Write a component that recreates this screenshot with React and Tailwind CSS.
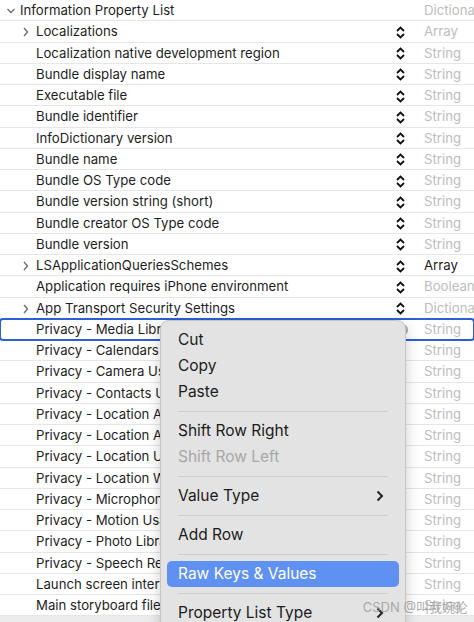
import React from 'react'

const rows = [
  { key: 'Information Property List', type: 'Dictionary', level: 0, open: true, noIcon: true },
  { key: 'Localizations', type: 'Array', level: 1, closed: true },
  { key: 'Localization native development region', type: 'String', level: 1 },
  { key: 'Bundle display name', type: 'String', level: 1 },
  { key: 'Executable file', type: 'String', level: 1 },
  { key: 'Bundle identifier', type: 'String', level: 1 },
  { key: 'InfoDictionary version', type: 'String', level: 1 },
  { key: 'Bundle name', type: 'String', level: 1 },
  { key: 'Bundle OS Type code', type: 'String', level: 1 },
  { key: 'Bundle version string (short)', type: 'String', level: 1 },
  { key: 'Bundle creator OS Type code', type: 'String', level: 1 },
  { key: 'Bundle version', type: 'String', level: 1 },
  { key: 'LSApplicationQueriesSchemes', type: 'Array', level: 1, closed: true, dark: true },
  { key: 'Application requires iPhone environment', type: 'Boolean', level: 1 },
  { key: 'App Transport Security Settings', type: 'Dictionary', level: 1, closed: true },
  { key: 'Privacy - Media Library Usage Description', type: 'String', level: 1, selected: true },
  { key: 'Privacy - Calendars Usage Description', type: 'String', level: 1, noIcon: true },
  { key: 'Privacy - Camera Usage Description', type: 'String', level: 1, noIcon: true },
  { key: 'Privacy - Contacts Usage Description', type: 'String', level: 1, noIcon: true },
  { key: 'Privacy - Location Always Usage Description', type: 'String', level: 1, noIcon: true },
  { key: 'Privacy - Location Always and When In Use Usage Description', type: 'String', level: 1, noIcon: true },
  { key: 'Privacy - Location Usage Description', type: 'String', level: 1, noIcon: true },
  { key: 'Privacy - Location When In Use Usage Description', type: 'String', level: 1, noIcon: true },
  { key: 'Privacy - Microphone Usage Description', type: 'String', level: 1, noIcon: true },
  { key: 'Privacy - Motion Usage Description', type: 'String', level: 1, noIcon: true },
  { key: 'Privacy - Photo Library Usage Description', type: 'String', level: 1, noIcon: true },
  { key: 'Privacy - Speech Recognition Usage Description', type: 'String', level: 1, noIcon: true },
  { key: 'Launch screen interface file base name', type: 'String', level: 1, noIcon: true },
  { key: 'Main storyboard file base name', type: 'String', level: 1, noIcon: true },
]

function Chevron({ down }) {
  return (
    <svg width="8" height="10" viewBox="0 0 8 10">
      {down ? (
        <path d="M0.5 3 L4 6.5 L7.5 3" fill="none" stroke="#6b6b6b" strokeWidth="1.3" />
      ) : (
        <path d="M2 1 L5.5 5 L2 9" fill="none" stroke="#6b6b6b" strokeWidth="1.3" />
      )}
    </svg>
  )
}

function UpDown() {
  return (
    <svg width="9" height="13" viewBox="0 0 9 13">
      <path d="M1 5 L4.5 1.5 L8 5" fill="none" stroke="#111" strokeWidth="1.8" />
      <path d="M1 8 L4.5 11.5 L8 8" fill="none" stroke="#111" strokeWidth="1.8" />
    </svg>
  )
}

function Row({ r }) {
  return (
    <div
      className={`relative flex items-center h-[21.25px] pt-[2px] border-b border-[#e6e6e6] ${
        r.selected ? 'outline-2 outline-[#2c5fd4] -outline-offset-1 rounded-[3px] z-10' : ''
      }`}
    >
      <div className="flex items-center w-[390px] shrink-0 overflow-hidden">
        {r.level === 0 ? (
          <div className="w-[20px] shrink-0 flex justify-center pl-[2px]">
            <Chevron down />
          </div>
        ) : (
          <div className="w-[36px] shrink-0 flex pl-[22px]">{r.closed && <Chevron />}</div>
        )}
        <span className="whitespace-nowrap text-[#1e1e1e]">{r.key}</span>
      </div>
      <div className="w-[34px] shrink-0 flex justify-start pl-[6px]">
        {!r.noIcon && !r.selected && <UpDown />}
        {r.selected && <span className="w-[12px] h-[12px] rounded-full bg-[#a9a9a9]" />}
      </div>
      <span className={`whitespace-nowrap ${r.dark ? 'text-[#1e1e1e]' : 'text-[#bdbdbd]'}`}>{r.type}</span>
    </div>
  )
}

function MenuItem({ label, disabled, sub, active }) {
  return (
    <div
      className={`flex items-center justify-between h-[26px] mx-[6px] px-[11px] rounded-[5px] ${
        active ? 'bg-[#5e91f1] text-white' : disabled ? 'text-[#a8a8a8]' : 'text-[#1c1c1c]'
      }`}
    >
      <span>{label}</span>
      {sub && (
        <svg width="8" height="12" viewBox="0 0 8 12" className="mr-[4px]">
          <path d="M1.5 1.5 L6 6 L1.5 10.5" fill="none" stroke="#222" strokeWidth="2" />
        </svg>
      )}
    </div>
  )
}

function Sep() {
  return (
    <div className="h-[13px] flex items-center px-[17px]">
      <div className="h-px w-full bg-[#cdcdcd]" />
    </div>
  )
}

export default function App() {
  return (
    <div className="relative w-[474px] h-[622px] overflow-hidden bg-white text-[13.2px] font-['Inter','Noto_Sans_CJK_SC',sans-serif]">
      <div className="flex flex-col">
        {rows.map((r, i) => (
          <Row key={i} r={r} />
        ))}
        <div className="h-[10px] bg-[#ececec]" />
      </div>

      {/* context menu */}
      <div className="absolute left-[160px] top-[320px] w-[246px] h-[320px] pt-[6px] bg-[#e3e3e3] border border-[#c6c6c6] rounded-[9px] shadow-[0_4px_14px_rgba(0,0,0,0.2)] text-[15.5px] z-20">
        <MenuItem label="Cut" />
        <MenuItem label="Copy" />
        <MenuItem label="Paste" />
        <Sep />
        <MenuItem label="Shift Row Right" />
        <MenuItem label="Shift Row Left" disabled />
        <Sep />
        <MenuItem label="Value Type" sub />
        <Sep />
        <MenuItem label="Add Row" />
        <Sep />
        <MenuItem label="Raw Keys & Values" active />
        <Sep />
        <MenuItem label="Property List Type" sub />
      </div>

      <div className="absolute right-[6px] bottom-[5px] z-30 text-[13px] text-[#9a9a9a] opacity-80 whitespace-nowrap">
        CSDN @叫我婉伦
      </div>
    </div>
  )
}
